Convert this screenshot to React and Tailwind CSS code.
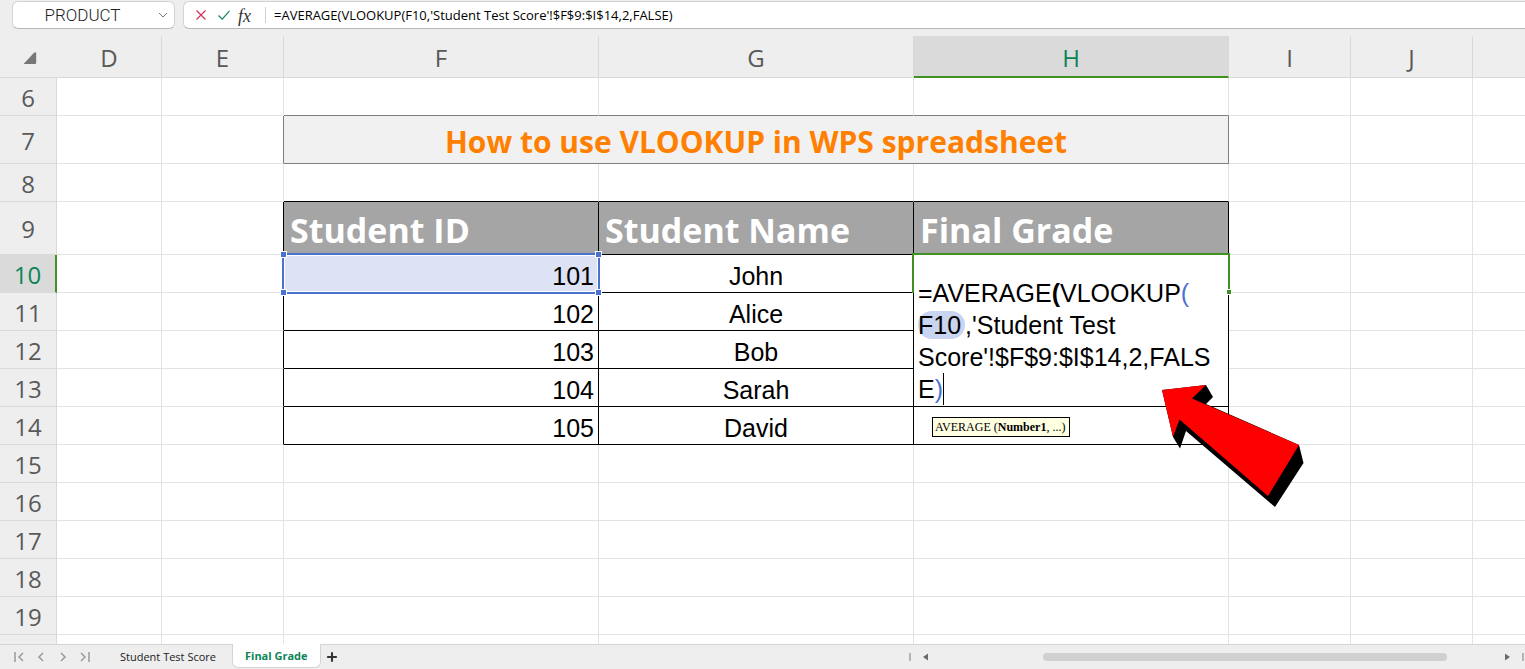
import { useState } from 'react'
import clsx from 'clsx'
import { Plus } from 'lucide-react'

const formula = "=AVERAGE(VLOOKUP(F10,'Student Test Score'!$F$9:$I$14,2,FALSE)"

const columns = [
  { name: 'D', width: 'w-[105px]' },
  { name: 'E', width: 'w-[122px]' },
  { name: 'F', width: 'w-[315px]' },
  { name: 'G', width: 'w-[315px]' },
  { name: 'H', width: 'w-[315px]' },
  { name: 'I', width: 'w-[122px]' },
  { name: 'J', width: 'w-[122px]' },
]

const students = [
  { row: 10, id: 101, name: 'John' },
  { row: 11, id: 102, name: 'Alice' },
  { row: 12, id: 103, name: 'Bob' },
  { row: 13, id: 104, name: 'Sarah' },
  { row: 14, id: 105, name: 'David' },
]

const emptyRows = [15, 16, 17, 18, 19]

const sheets = ['Student Test Score', 'Final Grade']

function Cell({ className, right = 'border-r-[#e3e3e3]', bottom = 'border-b-[#e3e3e3]', ...props }) {
  return <td className={clsx('border-r border-b p-0 last:border-r-0', right, bottom, className)} {...props} />
}

function Row({ n, height = 'h-[38px]', active, children }) {
  return (
    <tr className={height}>
      <th
        scope="row"
        className={clsx(
          'border-b border-b-[#d9d9d9] px-0 pt-0.5 pb-0 text-center text-[24px] leading-7 font-normal',
          active
            ? 'border-r-2 border-r-[#3f9122] bg-[#dadada] text-[#0b8457]'
            : 'border-r border-r-[#d9d9d9] bg-[#eeeeee] text-[#595959]',
        )}
      >
        {n}
      </th>
      {children}
    </tr>
  )
}

function FormulaBar() {
  const [name, setName] = useState('PRODUCT')
  const [value, setValue] = useState(formula)

  return (
    <div className="flex h-9 shrink-0 items-start gap-2 pt-px pl-3">
      <div className="flex h-7 w-[163px] items-center rounded-md border border-[#d4d4d4] border-b-[#b8b8b8] bg-white">
        <input
          aria-label="Name box"
          value={name}
          onChange={(e) => setName(e.target.value)}
          className="w-full min-w-0 flex-1 pt-0.5 text-center font-[Roboto,sans-serif] text-[17px] font-light text-[#222] outline-none"
        />
        <button type="button" aria-label="Name box list" className="px-1.5">
          <svg viewBox="0 0 10 6" className="h-1.5 w-2.5 fill-none stroke-[#777]">
            <path d="M1 1l4 4 4-4" />
          </svg>
        </button>
      </div>

      <div className="flex h-7 min-w-0 flex-1 items-center rounded-l-md border border-r-0 border-[#d4d4d4] border-b-[#b8b8b8] bg-white pl-3">
        <button type="button" aria-label="Cancel">
          <svg viewBox="0 0 10 10" className="size-2.5 fill-none stroke-[#cf3358] stroke-[1.2]">
            <path d="M.5.5l9 9M9.5.5l-9 9" />
          </svg>
        </button>
        <button type="button" aria-label="Enter" className="ml-3">
          <svg viewBox="0 0 12 10" className="h-2.5 w-3 fill-none stroke-[#17875b] stroke-[1.2]">
            <path d="M.5 5.5l3.7 3.7L11.5.8" />
          </svg>
        </button>
        <button
          type="button"
          aria-label="Insert function"
          className="ml-2 pt-0.5 font-['Liberation_Serif',serif] text-[18px] leading-5 text-[#333] italic"
        >
          fx
        </button>
        <span className="ml-3.5 h-4 w-px bg-[#cfcfcf]" />
        <input
          aria-label="Formula"
          value={value}
          onChange={(e) => setValue(e.target.value)}
          className="ml-2 min-w-0 flex-1 pt-0.5 text-[13px] text-black outline-none"
        />
      </div>
    </div>
  )
}

function RangeOutline() {
  return (
    <div className="absolute -inset-[2px] border-2 border-[#4a72cf]">
      <div className="h-full border border-white bg-[#dde2f5]" />
      <i className="absolute -top-[4px] -left-[4px] size-[7px] border border-white bg-[#4a72cf]" />
      <i className="absolute -top-[4px] -right-[4px] size-[7px] border border-white bg-[#4a72cf]" />
      <i className="absolute -bottom-[4px] -left-[4px] size-[7px] border border-white bg-[#4a72cf]" />
      <i className="absolute -right-[4px] -bottom-[4px] size-[7px] border border-white bg-[#4a72cf]" />
    </div>
  )
}

function Arrow() {
  return (
    <svg
      viewBox="1160 384 145 125"
      className="pointer-events-none absolute top-[129px] left-[246px] z-30 h-[125px] w-[145px] max-w-none"
      aria-hidden
    >
      <path d="M1162 390L1206 385L1213 397L1206 404L1299 445L1303.500 463L1275 507L1186 431L1180 448.500L1173 437Z" />
      <path fill="#ff0000" d="M1162 390L1206 385L1192 398.500L1299 445L1268 496L1179.500 419.500L1173 437Z" />
    </svg>
  )
}

function CellEditor() {
  return (
    <>
      <div className="absolute top-0 left-0 h-[151px] w-full bg-white pt-[22px] pl-1 font-['Liberation_Sans',Arial,sans-serif] text-[25px] leading-8 whitespace-nowrap text-black">
        =AVERAGE<b>(</b>VLOOKUP<span className="text-[#4a72cf]">(</span>
        <br />
        <span className="rounded-full bg-[#c9d4f1] pr-1 leading-6">F10</span>
        ,'Student Test
        <br />
        Score'!$F$9:$I$14,2,FALS
        <br />E<span className="border-r border-black py-0.5 text-[#4a72cf]">)</span>
      </div>
      <div className="pointer-events-none absolute -top-[2px] -right-[2px] -left-[2px] h-[40px] border-2 border-b-0 border-[#3f9122]" />
      <i className="absolute top-[34px] -right-[4px] size-[6px] border border-white bg-[#3f9122]" />
      <div className="absolute top-[162px] left-[18px] border border-black bg-[#ffffe1] pr-1 pl-0.5 font-['Liberation_Serif',serif] text-[12px] leading-[18px] whitespace-nowrap text-black">
        AVERAGE (<b>Number1</b>, ...)
      </div>
      <Arrow />
    </>
  )
}

function Sheet() {
  const head = 'border-r px-0 pt-[3px] pb-0 text-center text-[24px] leading-7 font-normal border-r-[#d9d9d9]'

  return (
    <table className="w-full table-fixed border-separate border-spacing-0">
      <colgroup>
        <col className="w-[57px]" />
        {columns.map((c) => (
          <col key={c.name} className={c.width} />
        ))}
        <col />
      </colgroup>
      <thead>
        <tr className="h-[42px] bg-[#eeeeee] text-[#595959]">
          <td className="border-b border-b-[#d9d9d9] px-0 pt-[3px] pb-0">
            <svg viewBox="0 0 13 12" className="ml-6 h-3 w-[13px] fill-[#777]" aria-hidden>
              <path d="M0 11.500L10 .8Q12.200-.8 12.200 1.500V10.500Q12.200 12 11 12H.8Q-.4 12 0 11.500Z" />
            </svg>
          </td>
          {columns.map((c) => (
            <th
              key={c.name}
              scope="col"
              className={clsx(
                head,
                c.name === 'H'
                  ? 'border-b-2 border-b-[#3f9122] bg-[#dadada] text-[#0b8457]'
                  : 'border-b border-b-[#d9d9d9]',
              )}
            >
              {c.name}
            </th>
          ))}
          <td className="border-b border-b-[#d9d9d9] p-0" />
        </tr>
      </thead>
      <tbody>
        <Row n={6}>
          <Cell />
          <Cell />
          <Cell bottom="border-b-[#7f7f7f]" />
          <Cell bottom="border-b-[#7f7f7f]" />
          <Cell bottom="border-b-[#7f7f7f]" />
          <Cell />
          <Cell />
          <Cell />
        </Row>
        <Row n={7} height="h-[48px]">
          <Cell />
          <Cell right="border-r-[#7f7f7f]" />
          <Cell
            colSpan={3}
            right="border-r-[#7f7f7f]"
            bottom="border-b-[#7f7f7f]"
            className="bg-[#f1f1f1] pt-1 text-center text-[30px] leading-10 font-bold text-[#ff8000]"
          >
            How to use VLOOKUP in WPS spreadsheet
          </Cell>
          <Cell />
          <Cell />
          <Cell />
        </Row>
        <Row n={8}>
          <Cell />
          <Cell />
          <Cell bottom="border-b-black" />
          <Cell bottom="border-b-black" />
          <Cell bottom="border-b-black" />
          <Cell />
          <Cell />
          <Cell />
        </Row>
        <Row n={9} height="h-[53px]">
          <Cell />
          <Cell right="border-r-black" />
          {['Student ID', 'Student Name', 'Final Grade'].map((title) => (
            <Cell
              key={title}
              right="border-r-black"
              bottom="border-b-black"
              className="bg-[#a5a5a5] pt-1 pl-1.5 text-[34px] leading-[48px] font-bold text-white"
            >
              {title}
            </Cell>
          ))}
          <Cell />
          <Cell />
          <Cell />
        </Row>
        {students.map((s) => {
          const active = s.row === 10
          const body =
            "align-bottom font-['Liberation_Sans',Arial,sans-serif] text-[25px] leading-8 text-black"
          return (
            <Row key={s.row} n={s.row} active={active}>
              <Cell />
              <Cell right="border-r-black" />
              <Cell
                right="border-r-black"
                bottom="border-b-black"
                className={clsx(body, 'pr-1 text-right', active && 'relative z-10')}
              >
                {active && <RangeOutline />}
                <span className="relative">{s.id}</span>
              </Cell>
              <Cell right="border-r-black" bottom="border-b-black" className={clsx(body, 'text-center')}>
                {s.name}
              </Cell>
              <Cell right="border-r-black" bottom="border-b-black" className={clsx(active && 'relative z-20')}>
                {active && <CellEditor />}
              </Cell>
              <Cell />
              <Cell />
              <Cell />
            </Row>
          )
        })}
        {emptyRows.map((n) => (
          <Row key={n} n={n}>
            {columns.map((c) => (
              <Cell key={c.name} />
            ))}
            <Cell />
          </Row>
        ))}
        <Row>
          {columns.map((c) => (
            <Cell key={c.name} />
          ))}
          <Cell />
        </Row>
      </tbody>
    </table>
  )
}

function NavButton({ label, d }) {
  return (
    <button type="button" aria-label={label}>
      <svg viewBox="0 0 10 10" className="size-2.5 fill-none stroke-[#9a9a9a] stroke-[1.5]">
        <path d={d} />
      </svg>
    </button>
  )
}

function SheetTabs() {
  const [current, setCurrent] = useState('Final Grade')

  return (
    <div className="flex h-[25px] shrink-0 border-t border-[#d4d4d4] bg-[#eeeeee]">
      <div className="flex min-w-0 grow-3 basis-0">
        <div className="flex items-center gap-3 px-3.5">
          <NavButton label="First sheet" d="M1 0v10M9 1L5 5l4 4" />
          <NavButton label="Previous sheet" d="M7 1L3 5l4 4" />
          <NavButton label="Next sheet" d="M3 1l4 4-4 4" />
          <NavButton label="Last sheet" d="M9 0v10M1 1l4 4-4 4" />
        </div>
        {sheets.map((sheet) => (
          <button
            key={sheet}
            type="button"
            onClick={() => setCurrent(sheet)}
            className={clsx(
              'h-6 text-[11px] whitespace-nowrap',
              sheet === current
                ? '-mt-px rounded-b-md border border-t-0 border-[#d4d4d4] bg-white px-3 pt-0.5 font-bold text-[#0b8457]'
                : 'px-4 text-[#222]',
            )}
          >
            {sheet}
          </button>
        ))}
        <button type="button" aria-label="New sheet" className="px-1">
          <Plus className="size-3.5 text-[#333]" strokeWidth={3.5} />
        </button>
      </div>
      <div className="flex grow-2 basis-2.5 items-center">
        <span className="h-2 w-0.5 bg-[#b5b5b5]" />
        <button type="button" aria-label="Scroll left" className="ml-3">
          <svg viewBox="0 0 5 8" className="h-2 w-[5px] fill-[#6b6b6b]">
            <path d="M5 .5v7L0 4z" />
          </svg>
        </button>
        <div className="flex-1">
          <div className="ml-[20%] h-2 w-[70%] rounded-full bg-[#d0d0d0]" />
        </div>
        <button type="button" aria-label="Scroll right" className="mr-3">
          <svg viewBox="0 0 5 8" className="h-2 w-[5px] fill-[#6b6b6b]">
            <path d="M0 .5v7L5 4z" />
          </svg>
        </button>
        <span className="mr-px h-2 w-0.5 bg-[#b5b5b5]" />
      </div>
    </div>
  )
}

export default function App() {
  return (
    <div className="flex h-screen flex-col bg-[#eeeeee] font-['Open_Sans','Noto_Sans',sans-serif]">
      <FormulaBar />
      <main className="min-h-0 flex-1 overflow-hidden bg-white">
        <Sheet />
      </main>
      <SheetTabs />
    </div>
  )
}
